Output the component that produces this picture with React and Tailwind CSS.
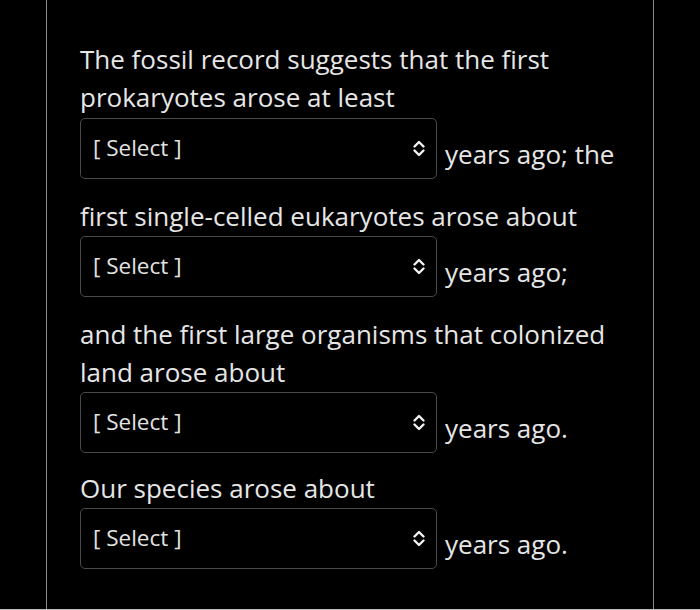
import React from "react";

const Chevron = () => (
  <svg width="14" height="19" viewBox="0 0 14 19" fill="none" className="shrink-0">
    <path d="M2.5 7.5 L7 3 L11.5 7.5" stroke="#f2f2f2" strokeWidth="2.4" strokeLinecap="round" strokeLinejoin="round" />
    <path d="M2.5 11.5 L7 16 L11.5 11.5" stroke="#f2f2f2" strokeWidth="2.4" strokeLinecap="round" strokeLinejoin="round" />
  </svg>
);

const SelectRow = ({ after, className = "" }) => (
  <div className={"flex items-start " + className}>
    <div className="w-[357px] h-[61px] shrink-0 border border-[#4a4a4a] rounded-[5px] bg-black flex items-center justify-between pl-[12px] pr-[10px]">
      <span className="text-[22.5px] leading-[28px] text-[#e2e2e2] -mt-[2px]">[ Select ]</span>
      <Chevron />
    </div>
    <span className="ml-[8px] mt-[17px] text-[26px] leading-[38px] text-[#e6e6e6] whitespace-nowrap">{after}</span>
  </div>
);

const Line = ({ children, className = "" }) => (
  <div className={"text-[26px] leading-[38px] text-[#e6e6e6] whitespace-nowrap " + className}>{children}</div>
);

export default function App() {
  return (
    <div
      className="w-[700px] h-[610px] bg-black border-b border-[#bdbdbd] overflow-hidden"
      style={{ fontFamily: '"Open Sans", "Noto Sans", sans-serif' }}
    >
      <div className="ml-[46px] w-[608px] h-full border-x border-[#8a8a8a] pl-[33px] pt-[40px]">
        <Line>The fossil record suggests that the first</Line>
        <Line>prokaryotes arose at least</Line>
        <SelectRow className="mt-[2px]" after="years ago; the" />
        <Line className="mt-[18px]">first single-celled eukaryotes arose about</Line>
        <SelectRow className="mt-[1px]" after="years ago;" />
        <Line className="mt-[18px]">and the first large organisms that colonized</Line>
        <Line>land arose about</Line>
        <SelectRow className="mt-[1px]" after="years ago." />
        <Line className="mt-[16px]">Our species arose about</Line>
        <SelectRow className="mt-[1px]" after="years ago." />
      </div>
    </div>
  );
}
